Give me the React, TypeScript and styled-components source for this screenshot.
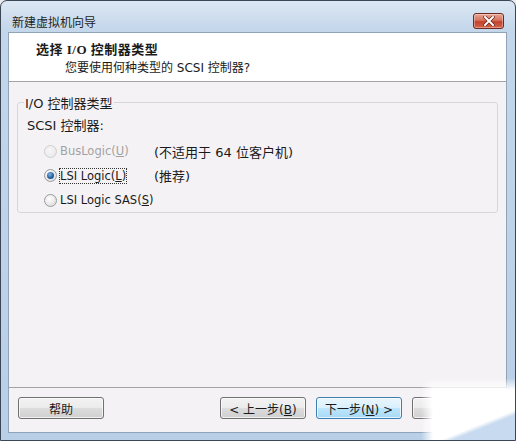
import React from 'react';
import styled, { createGlobalStyle, css } from 'styled-components';

const GlobalStyle = createGlobalStyle`
  html, body {
    margin: 0;
    padding: 0;
    background: #e8ecf0;
  }
  * {
    box-sizing: border-box;
  }
`;

const UI_FONT = `"DejaVu Sans", "Noto Sans CJK SC", sans-serif`;

const Window = styled.div`
  position: relative;
  width: 516px;
  height: 441px;
  display: flex;
  flex-direction: column;
  border: 1px solid #3a4656;
  border-radius: 7px 7px 0 0;
  background: linear-gradient(180deg, #dce7f3 0px, #c3d6ea 30px, #b9cfe7 100%);
  font-family: ${UI_FONT};
  color: #1a1a1a;
  overflow: hidden;
`;

const TitleBar = styled.div`
  height: 31px;
  flex: none;
  display: flex;
  align-items: center;
  justify-content: space-between;
  padding: 0 11px 0 11px;
`;

const TitleText = styled.span`
  font-size: 12px;
  color: #1e1e1e;
  margin-top: 9px;
`;

const CloseButton = styled.div`
  width: 31px;
  height: 16px;
  margin-top: 8px;
  border: 1px solid #6e2a22;
  border-radius: 3px;
  display: flex;
  align-items: center;
  justify-content: center;
  background: linear-gradient(180deg, #e8a595 0%, #d5725d 45%, #c4422b 55%, #d0654c 100%);
  box-shadow: inset 0 0 0 1px rgba(255, 255, 255, 0.35);
`;

const Client = styled.div`
  flex: 1;
  margin: 0 8px 7px 7px;
  border: 1px solid #8fa3b9;
  background: #f5f2f5;
  display: flex;
  flex-direction: column;
  min-height: 0;
`;

const Header = styled.div`
  height: 49px;
  flex: none;
  background: #ffffff;
  border-bottom: 1px solid #a3a3a3;
  padding: 6px 0 0 27px;
  display: flex;
  flex-direction: column;
`;

const HeaderTitle = styled.div`
  font-size: 13px;
  font-weight: bold;
  font-family: "Liberation Serif", "Noto Sans CJK SC", serif;
  letter-spacing: 0.5px;
`;

const HeaderSubtitle = styled.div`
  font-size: 12px;
  padding-left: 29px;
`;

const Body = styled.div`
  flex: 1;
  padding: 11px 8px 0 8px;
`;

const Group = styled.fieldset`
  margin: 0;
  padding: 0 0 4px 9px;
  border: 1px solid #d5d7dc;
  border-radius: 3px;
  height: 120px;
`;

const GroupLegend = styled.legend`
  font-size: 13px;
  padding: 0 1px;
  margin-left: -3px;
`;

const SubLabel = styled.div`
  font-size: 13px;
  margin: 3px 0 5px 0;
`;

const OptionRow = styled.label`
  display: flex;
  align-items: center;
  height: 24.5px;
  padding-left: 17px;
`;

const RadioDot = styled.span<{ $checked?: boolean; $disabled?: boolean }>`
  width: 13px;
  height: 13px;
  flex: none;
  border-radius: 50%;
  border: 1px solid ${(p) => (p.$disabled ? '#cfcfcf' : '#9a9c9d')};
  background: ${(p) =>
    p.$disabled
      ? 'radial-gradient(circle at 40% 40%, #f6f6f6, #e6e6e6)'
      : 'radial-gradient(circle at 40% 35%, #ffffff, #e2e2e2 70%, #d4d4d4)'};
  display: flex;
  align-items: center;
  justify-content: center;
  margin-right: 3px;
  ${(p) =>
    p.$checked &&
    css`
      &::after {
        content: '';
        width: 7px;
        height: 7px;
        border-radius: 50%;
        background: radial-gradient(circle at 40% 35%, #7fb2e3, #1f5c9a 60%, #123f6e);
      }
    `}
`;

const OptionText = styled.span<{ $disabled?: boolean; $focused?: boolean }>`
  font-size: 11.5px;
  width: 94px;
  color: ${(p) => (p.$disabled ? '#a2a2a2' : '#1a1a1a')};
  ${(p) =>
    p.$focused &&
    css`
      span.focus {
        outline: 1px dotted #333;
        outline-offset: 0px;
      }
    `}
`;

const Note = styled.span`
  font-size: 13px;
`;

const Key = styled.u`
  text-underline-offset: 1px;
`;

const Footer = styled.div`
  height: 45px;
  flex: none;
  border-top: 1px solid #a3a3a3;
  display: flex;
  align-items: flex-start;
  justify-content: space-between;
  padding: 9px 8px 0 9px;
`;

const ButtonGroup = styled.div`
  display: flex;
  gap: 10px;
`;

const WizardButton = styled.button<{ $default?: boolean }>`
  width: 86px;
  height: 22px;
  padding: 0;
  font-family: ${UI_FONT};
  font-size: 12px;
  color: #1a1a1a;
  border-radius: 3px;
  border: 1px solid ${(p) => (p.$default ? '#3c7fb1' : '#707070')};
  background: ${(p) =>
    p.$default
      ? 'linear-gradient(180deg, #eaf6fd 0%, #d9f0fc 50%, #bee6fd 51%, #a7d9f5 100%)'
      : 'linear-gradient(180deg, #f2f2f2 0%, #ebebeb 50%, #dddddd 51%, #cfcfcf 100%)'};
  box-shadow: inset 0 0 0 1px rgba(255, 255, 255, 0.7);
`;

/* white light reflection over the lower right corner of the screenshot */
const Glare = styled.div`
  position: absolute;
  right: 0;
  bottom: 0;
  width: 94px;
  height: 62px;
  pointer-events: none;
  background:
    linear-gradient(158deg, rgba(196, 216, 238, 0) 70%, rgba(196, 216, 238, 0.95) 75%),
    linear-gradient(90deg, rgba(255, 255, 255, 0) 0px, #ffffff 12px);
  -webkit-mask-image: linear-gradient(180deg, rgba(0, 0, 0, 0) 0px, #000 12px);
  mask-image: linear-gradient(180deg, rgba(0, 0, 0, 0) 0px, #000 12px);
`;

type Option = {
  label: string;
  key: string;
  note?: string;
  checked?: boolean;
  disabled?: boolean;
};

const options: Option[] = [
  { label: 'BusLogic', key: 'U', note: '(不适用于 64 位客户机)', disabled: true },
  { label: 'LSI Logic', key: 'L', note: '(推荐)', checked: true },
  { label: 'LSI Logic SAS', key: 'S' },
];

const CloseIcon = () => (
  <svg width="12" height="10" viewBox="0 0 12 10">
    <path d="M2 1 L10 9 M10 1 L2 9" stroke="#5a1a12" strokeWidth="3.2" strokeLinecap="square" />
    <path d="M2 1 L10 9 M10 1 L2 9" stroke="#ffffff" strokeWidth="2" strokeLinecap="square" />
  </svg>
);

export default function App() {
  return (
    <>
      <GlobalStyle />
      <Window>
        <TitleBar>
          <TitleText>新建虚拟机向导</TitleText>
          <CloseButton>
            <CloseIcon />
          </CloseButton>
        </TitleBar>
        <Client>
          <Header>
            <HeaderTitle>选择 I/O 控制器类型</HeaderTitle>
            <HeaderSubtitle>您要使用何种类型的 SCSI 控制器?</HeaderSubtitle>
          </Header>
          <Body>
            <Group>
              <GroupLegend>I/O 控制器类型</GroupLegend>
              <SubLabel>SCSI 控制器:</SubLabel>
              {options.map((o) => (
                <OptionRow key={o.key}>
                  <RadioDot $checked={o.checked} $disabled={o.disabled} />
                  <OptionText $disabled={o.disabled} $focused={o.checked}>
                    <span className="focus">
                      {o.label}(<Key>{o.key}</Key>)
                    </span>
                  </OptionText>
                  {o.note && <Note>{o.note}</Note>}
                </OptionRow>
              ))}
            </Group>
          </Body>
          <Footer>
            <WizardButton>帮助</WizardButton>
            <ButtonGroup>
              <WizardButton>
                &lt; 上一步(<Key>B</Key>)
              </WizardButton>
              <WizardButton $default>
                下一步(<Key>N</Key>) &gt;
              </WizardButton>
              <WizardButton>取消</WizardButton>
            </ButtonGroup>
          </Footer>
        </Client>
        <Glare />
      </Window>
    </>
  );
}
